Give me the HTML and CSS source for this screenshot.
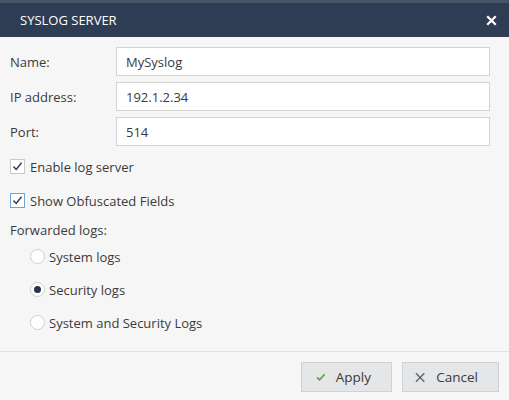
FILE: index.html
```html
<!DOCTYPE html>
<html>
<head>
<meta charset="utf-8">
<link rel="stylesheet" href="styles.css">
</head>
<body>
<div class="dialog">
  <div class="header">
    <span class="title">SYSLOG SERVER</span>
    <span class="close"><svg width="11" height="11" viewBox="0 0 11 11"><path d="M2 2 L9 9 M9 2 L2 9" stroke="#fff" stroke-width="2.2" stroke-linecap="square"/></svg></span>
  </div>
  <div class="body">
    <div class="field"><label class="lbl">Name:</label><div class="input">MySyslog</div></div>
    <div class="field"><label class="lbl">IP address:</label><div class="input">192.1.2.34</div></div>
    <div class="field"><label class="lbl">Port:</label><div class="input">514</div></div>
    <div class="check first"><span class="box"><svg width="11" height="11" viewBox="0 0 11 11"><path d="M1.5 5.5 L4.2 8.5 L9.5 1.8" fill="none" stroke="#2f3a48" stroke-width="1.4"/></svg></span><span>Enable log server</span></div>
    <div class="check"><span class="box focus"><svg width="11" height="11" viewBox="0 0 11 11"><path d="M1.5 5.5 L4.2 8.5 L9.5 1.8" fill="none" stroke="#2f3a48" stroke-width="1.4"/></svg></span><span>Show Obfuscated Fields</span></div>
    <div class="group-label">Forwarded logs:</div>
    <div class="radios">
      <div class="radio"><span class="circle"></span><span>System logs</span></div>
      <div class="radio"><span class="circle on"></span><span>Security logs</span></div>
      <div class="radio"><span class="circle"></span><span>System and Security Logs</span></div>
    </div>
  </div>
  <div class="footer">
    <button class="btn"><svg width="14" height="12" viewBox="0 0 14 12"><path d="M1.5 6.5 L5 10 L12.5 2" fill="none" stroke="#5aa832" stroke-width="2.4"/></svg>Apply</button>
    <button class="btn cancel"><svg width="11" height="11" viewBox="0 0 11 11"><path d="M1 1 L10 10 M10 1 L1 10" fill="none" stroke="#5d6670" stroke-width="1.5"/></svg>Cancel</button>
  </div>
</div>
</body>
</html>
```
FILE: styles.css
```css
* { box-sizing: border-box; }
html, body { margin: 0; padding: 0; }
body {
  font-family: "Open Sans", "Liberation Sans", sans-serif;
  font-size: 13px;
  color: #3b3b3b;
  background: #f6f6f6;
  width: 509px;
  height: 400px;
  overflow: hidden;
}
.dialog { width: 509px; height: 400px; display: flex; flex-direction: column; background: #f6f6f6; }
.header {
  height: 37px;
  background: #2e3d54;
  border-top: 3px solid #485466;
  display: flex;
  align-items: center;
  justify-content: space-between;
  padding: 0 12px 0 20px;
}
.title { color: #fff; font-size: 13px; }
.close { display: flex; }
.body { flex: 1; padding: 10px 19px 0 10px; }
.field { display: flex; align-items: center; margin-bottom: 6px; }
.lbl { width: 106px; font-size: 13px; }
.input {
  flex: 1;
  height: 29px;
  border: 1px solid #d3d3d3;
  background: #fff;
  padding: 0 9px;
  display: flex;
  align-items: center;
  font-size: 13px;
  color: #3a3a3a;
}
.check { display: flex; align-items: center; height: 17px; margin-top: 12px; font-size: 13px; }
.check + .check { margin-top: 17px; }
.box {
  width: 15px; height: 15px;
  border: 1px solid #c8c8c8;
  background: #fff;
  margin-right: 5px;
  display: flex; align-items: center; justify-content: center;
}
.box.focus { border-color: #6ba6d6; }
.group-label { margin-top: 12px; font-size: 13px; }
.radios { padding-left: 20px; }
.radio { display: flex; align-items: center; height: 17px; margin-top: 16px; font-size: 13px; }
.radio:first-child { margin-top: 9px; }
.circle {
  width: 15px; height: 15px; border-radius: 50%;
  border: 1px solid #cfcfcf; background: #fff; margin-right: 4px;
  display: flex; align-items: center; justify-content: center;
}
.circle.on::after { content: ""; width: 7px; height: 7px; border-radius: 50%; background: #27354a; }
.footer {
  height: 49px;
  border-top: 1px solid #dfe1e5;
  display: flex;
  justify-content: flex-end;
  align-items: flex-start;
  padding: 10px 10px 0 0;
  gap: 10px;
}
.btn {
  height: 30px;
  border: 1px solid #cfd1d4;
  background: #e5e6e8;
  font-family: inherit;
  font-size: 13.5px;
  color: #3a3a3a;
  display: flex;
  align-items: center;
  gap: 10px;
  padding: 0 20px 0 14px;
  width: 91px;
}
.btn.cancel { width: 97px; padding-left: 12px; gap: 11px; }
```
